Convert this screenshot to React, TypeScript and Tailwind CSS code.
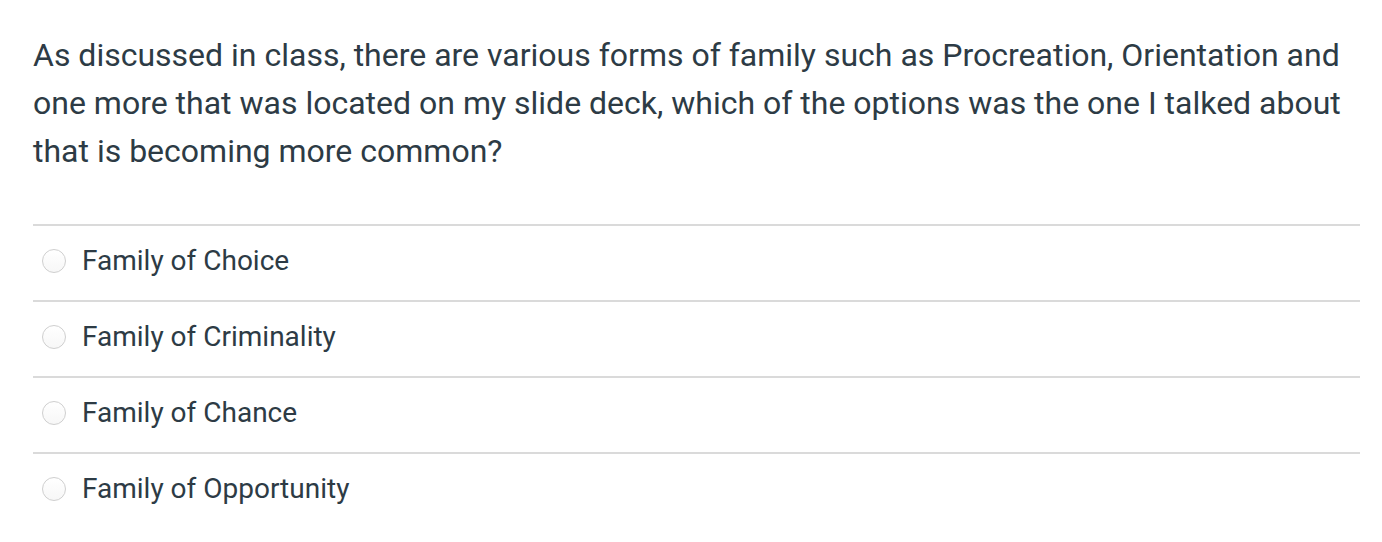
import React from 'react';

const options = ['Family of Choice', 'Family of Criminality', 'Family of Chance', 'Family of Opportunity'];

export default function App() {
    return (
        <div className="min-h-screen bg-white pl-[33px] pr-[22px] pt-[31px] text-[#2d3b45]" style={{ fontFamily: 'Roboto, "Liberation Sans", sans-serif' }}>
            <p className="text-[32px] leading-[48px]">
                As discussed in class, there are various forms of family such as Procreation, Orientation and one more that was located on my slide deck, which of the options was the one I talked about that is becoming more common?
            </p>
            <div className="mt-[49px]">
                {options.map((opt) => (
                    <label key={opt} className="flex h-[76px] items-center gap-[16px] border-t-2 border-[#dadada] pb-[4px] pl-[9px]">
                        <span className="h-[24px] w-[24px] shrink-0 rounded-full border border-[#cfcfcf] bg-gradient-to-b from-white to-[#f7f7f7]" />
                        <span className="text-[28px]">{opt}</span>
                    </label>
                ))}
            </div>
        </div>
    );
}
